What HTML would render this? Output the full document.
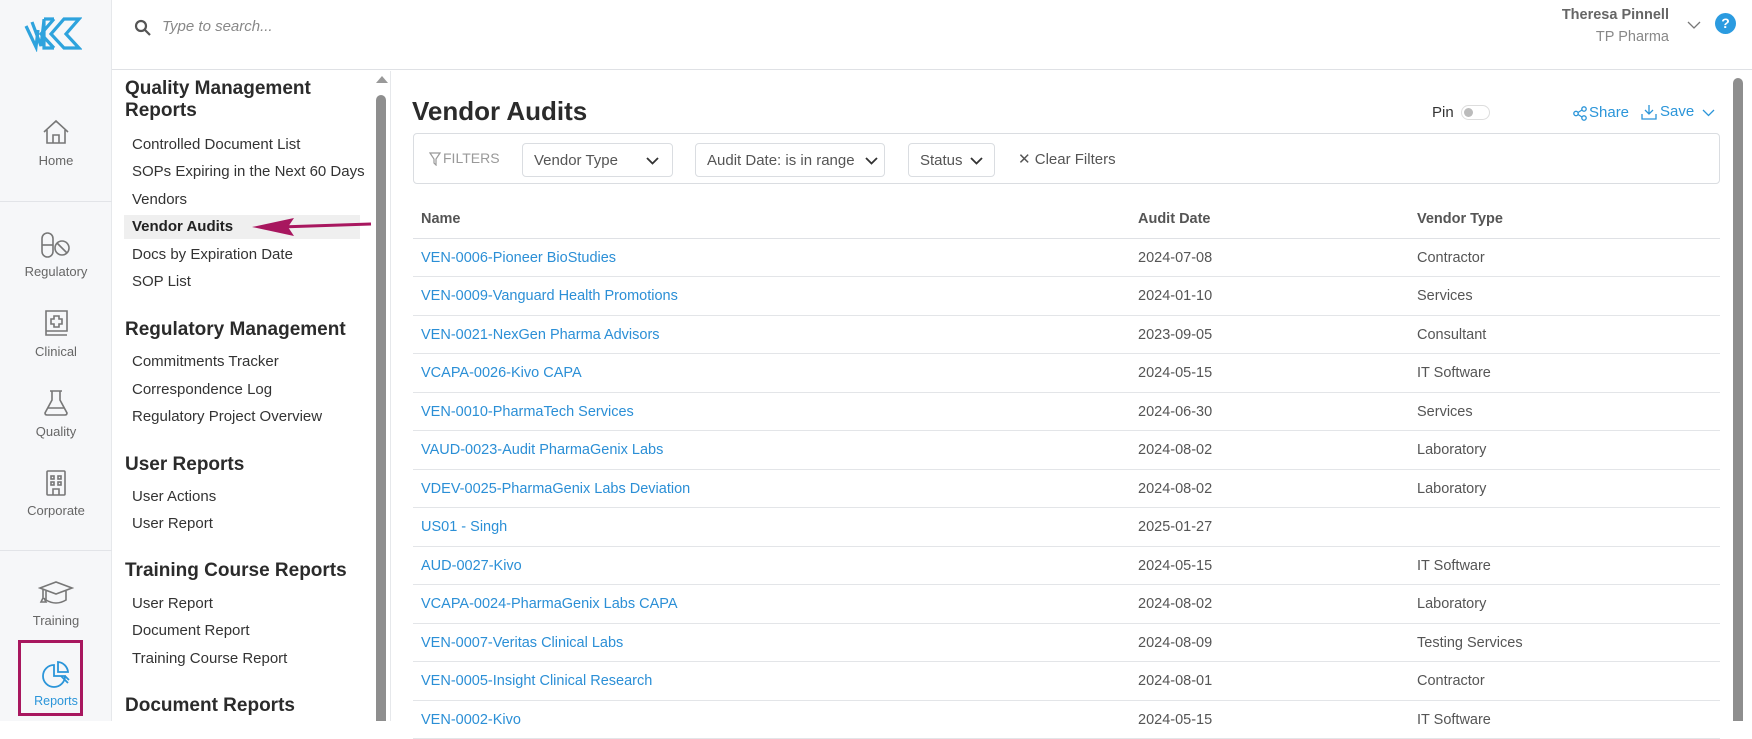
<!DOCTYPE html>
<html><head><meta charset="utf-8"><style>
*{box-sizing:border-box;margin:0;padding:0}
body{width:1752px;height:721px;overflow:hidden;background:#fff;font-family:"Liberation Sans",sans-serif;color:#333;position:relative}
.abs{position:absolute}
.rail{left:0;top:0;width:112px;height:721px;background:#f6f7f9;border-right:1px solid #e6e8eb}
.rl{position:absolute;width:112px;text-align:center;font-size:13px;color:#666}
.ri{position:absolute;left:41px;width:30px;height:30px}
.hdr{left:112px;top:0;right:0;height:70px;border-bottom:1px solid #dfe1e5;background:#fff}
.nav{left:112px;top:71px;width:262px;height:650px}
.nh{position:absolute;left:13px;font-size:19px;font-weight:bold;color:#2b2b2b;line-height:22px}
.ni{position:absolute;left:20px;font-size:15px;color:#333;line-height:18px}
.row{position:absolute;left:413px;width:1307px;height:38.5px;border-bottom:1px solid #e3e5e8;font-size:14.5px}
.row span{position:absolute;top:11px}
.a{left:8px;color:#2b8fd6}.b{left:725px;color:#555}.c{left:1004px;color:#555}
.fb{position:absolute;top:9px;height:34px;border:1px solid #dadde1;border-radius:4px;font-size:15px;color:#555;padding:8px 11px}
</style></head><body>
<div class="abs rail">
<svg class="abs" style="left:24px;top:10px" width="58" height="42" viewBox="0 0 58 42"><g fill="none" stroke="#2ea3dd" stroke-width="3.2"><path d="M2 16 L12 37 L14 20"/><path d="M8 12 L17 36 L20 10"/><path d="M20 9 H30 M20 9 V38 H30"/><path d="M30 9 L17 24 L30 38"/><path d="M40 9 H55 L42 24 L55 38 H40 L27 24 Z"/></g></svg>
<div class="abs" style="left:0;top:201px;width:112px;border-top:1px solid #e2e4e8"></div>
<div class="abs" style="left:0;top:550px;width:112px;border-top:1px solid #e2e4e8"></div>
<svg class="ri" style="top:118px" viewBox="0 0 30 30" fill="none" stroke="#777" stroke-width="1.6"><path d="M3 14 L15 3 L27 14 M6 12 V25 H24 V12 M12 25 V17 H18 V25"/></svg>
<div class="rl" style="top:153px">Home</div>
<svg class="ri" style="top:230px" viewBox="0 0 30 30" fill="none" stroke="#777" stroke-width="1.6"><rect x="1" y="3" width="11" height="24" rx="5.5"/><path d="M1 15 H12"/><circle cx="21" cy="18" r="7"/><path d="M16 13 L26 23"/></svg>
<div class="rl" style="top:264px">Regulatory</div>
<svg class="ri" style="top:308px" viewBox="0 0 30 30" fill="none" stroke="#777" stroke-width="1.6"><path d="M5 3 H26 V23 H5 Z M5 23 V27 H26"/><path d="M13 8 H18 V11 H21 V16 H18 V19 H13 V16 H10 V11 H13 Z"/></svg>
<div class="rl" style="top:344px">Clinical</div>
<svg class="ri" style="top:388px" viewBox="0 0 30 30" fill="none" stroke="#777" stroke-width="1.6"><path d="M9 3 H21 M11 3 V12 L4 25 Q4 27 6 27 H24 Q26 27 26 25 L19 12 V3 M7 20 H23"/></svg>
<div class="rl" style="top:424px">Quality</div>
<svg class="ri" style="top:468px" viewBox="0 0 30 30" fill="none" stroke="#777" stroke-width="1.6"><rect x="6" y="3" width="18" height="24" rx="1"/><rect x="10" y="8" width="3" height="3"/><rect x="17" y="8" width="3" height="3"/><rect x="10" y="14" width="3" height="3"/><rect x="17" y="14" width="3" height="3"/><path d="M12 27 V21 H18 V27"/></svg>
<div class="rl" style="top:503px">Corporate</div>
<svg class="ri" style="left:38px;top:578px;width:36px" viewBox="0 0 36 30" fill="none" stroke="#777" stroke-width="1.6"><path d="M2 10 L18 4 L34 10 L18 16 Z M8 13 V22 Q18 28 28 22 V13 M5 11 V20 L3 24 H8 L6 20"/></svg>
<div class="rl" style="top:613px">Training</div>
<div class="abs" style="left:18px;top:640px;width:65px;height:76px;border:3px solid #a8175f"></div>
<svg class="ri" style="top:659px" viewBox="0 0 30 30" fill="none" stroke="#2b95d9" stroke-width="1.8"><path d="M13 6 A11 11 0 1 0 24 17 H13 Z"/><path d="M17 3 A11 11 0 0 1 27 13 H17 Z"/><path d="M20 17 L27 24 M24 17 L28 21"/></svg>
<div class="rl" style="top:694px;color:#2b95d9;font-size:12.5px">Reports</div>
</div>
<div class="abs hdr">
<svg class="abs" style="left:22px;top:19px" width="18" height="18" viewBox="0 0 18 18" fill="none" stroke="#555" stroke-width="2.2"><circle cx="7" cy="7" r="5"/><path d="M11 11 L16 16"/></svg>
<div class="abs" style="left:50px;top:18px;font-size:15px;font-style:italic;color:#888">Type to search...</div>
<div class="abs" style="right:83px;top:7px;font-size:14.5px;font-weight:bold;color:#666;text-align:right">Theresa Pinnell</div>
<div class="abs" style="right:83px;top:29px;font-size:14.5px;color:#888;text-align:right">TP Pharma</div>
<svg class="abs" style="left:1575px;top:21px" width="14" height="9" viewBox="0 0 14 9" fill="none" stroke="#777" stroke-width="1.3"><path d="M1 1 L7 7 L13 1"/></svg>
<div class="abs" style="left:1603px;top:13px;width:21px;height:21px;border-radius:50%;background:#2b9be0;color:#fff;font-weight:bold;font-size:14px;text-align:center;line-height:21px">?</div>
</div>
<div class="abs nav">
<div class="nh" style="top:7px">Quality Management<br>Reports</div>
<div class="abs" style="left:12px;top:144px;width:236px;height:24px;background:#efefef"></div>
<div class="ni" style="top:65px">Controlled Document List</div>
<div class="ni" style="top:92px">SOPs Expiring in the Next 60 Days</div>
<div class="ni" style="top:120px">Vendors</div>
<div class="ni" style="top:147px;font-weight:bold;color:#222">Vendor Audits</div>
<div class="ni" style="top:175px">Docs by Expiration Date</div>
<div class="ni" style="top:202px">SOP List</div>
<div class="nh" style="top:248px">Regulatory Management</div>
<div class="ni" style="top:282px">Commitments Tracker</div>
<div class="ni" style="top:310px">Correspondence Log</div>
<div class="ni" style="top:337px">Regulatory Project Overview</div>
<div class="nh" style="top:383px">User Reports</div>
<div class="ni" style="top:417px">User Actions</div>
<div class="ni" style="top:444px">User Report</div>
<div class="nh" style="top:489px">Training Course Reports</div>
<div class="ni" style="top:524px">User Report</div>
<div class="ni" style="top:551px">Document Report</div>
<div class="ni" style="top:579px">Training Course Report</div>
<div class="nh" style="top:624px">Document Reports</div>
<svg class="abs" style="left:138px;top:143px" width="122" height="26" viewBox="0 0 122 26"><path d="M30 13 L121 10" stroke="#a8175f" stroke-width="3"/><path d="M2 13 L44 4 L38 13 L44 22 Z" fill="#a8175f"/></svg>
</div>
<div class="abs" style="left:374px;top:71px;width:14px;height:650px;background:#fff"></div>
<div class="abs" style="left:376px;top:76px;width:0;height:0;border-left:6px solid transparent;border-right:6px solid transparent;border-bottom:7px solid #999"></div>
<div class="abs" style="left:376px;top:95px;width:10px;height:626px;background:#8e8e8e;border-radius:5px 5px 0 0"></div>
<div class="abs" style="left:390px;top:71px;width:1px;height:650px;background:#e6e8eb"></div>
<div class="abs" style="left:1733px;top:78px;width:10px;height:643px;background:#8e8e8e;border-radius:5px 5px 0 0"></div>
<div class="abs" style="left:412px;top:96px;font-size:26px;font-weight:bold;color:#2b2b2b">Vendor Audits</div>
<div class="abs" style="left:1432px;top:104px;font-size:15px;color:#333">Pin</div>
<div class="abs" style="left:1461px;top:105px;width:29px;height:15px;border:1px solid #ddd;border-radius:8px"><div class="abs" style="left:2px;top:2px;width:9px;height:9px;border-radius:50%;background:#bbb"></div></div>
<svg class="abs" style="left:1573px;top:106px" width="14" height="15" viewBox="0 0 14 15" fill="none" stroke="#2b95d9" stroke-width="1.3"><circle cx="11" cy="3" r="2.2"/><circle cx="3" cy="7.5" r="2.2"/><circle cx="11" cy="12" r="2.2"/><path d="M5 6.5 L9 4 M5 8.5 L9 11"/></svg>
<div class="abs" style="left:1589px;top:104px;font-size:15px;color:#2b95d9">Share</div>
<svg class="abs" style="left:1641px;top:104px" width="16" height="16" viewBox="0 0 16 16" fill="none" stroke="#2b95d9" stroke-width="1.3"><path d="M8 1 V10 M4 6 L8 10 L12 6 M1 10 V15 H15 V10"/></svg>
<div class="abs" style="left:1660px;top:103px;font-size:15px;color:#2b95d9">Save</div>
<svg class="abs" style="left:1702px;top:109px" width="13" height="8" viewBox="0 0 13 8" fill="none" stroke="#2b95d9" stroke-width="1.3"><path d="M1 1 L6.5 6.5 L12 1"/></svg>
<div class="abs" style="left:413px;top:133px;width:1307px;height:51px;border:1px solid #dadde1;border-radius:4px">
<svg class="abs" style="left:15px;top:18px" width="12" height="14" viewBox="0 0 12 14" fill="none" stroke="#999" stroke-width="1.2"><path d="M1 1 H11 L7 7 V13 L5 11 V7 Z"/></svg>
<div class="abs" style="left:29px;top:16px;font-size:14px;color:#999">FILTERS</div>
<div class="fb" style="left:108px;width:151px">Vendor Type<svg class="abs" style="right:13px;top:13px" width="13" height="8" viewBox="0 0 13 8" fill="none" stroke="#333" stroke-width="1.8"><path d="M1 1 L6.5 6.5 L12 1"/></svg></div>
<div class="fb" style="left:281px;width:190px">Audit Date: is in range<svg class="abs" style="right:6px;top:13px" width="13" height="8" viewBox="0 0 13 8" fill="none" stroke="#333" stroke-width="1.8"><path d="M1 1 L6.5 6.5 L12 1"/></svg></div>
<div class="fb" style="left:494px;width:87px">Status<svg class="abs" style="right:11px;top:13px" width="13" height="8" viewBox="0 0 13 8" fill="none" stroke="#333" stroke-width="1.8"><path d="M1 1 L6.5 6.5 L12 1"/></svg></div>
<div class="abs" style="left:604px;top:16px;font-size:15px;color:#555">✕ Clear Filters</div>
</div>
<div class="row" style="top:200px;font-weight:bold;border-bottom:1px solid #dfe1e5"><span class="a" style="color:#555">Name</span><span class="b">Audit Date</span><span class="c">Vendor Type</span></div>
<div class="row" style="top:238.5px"><span class="a">VEN-0006-Pioneer BioStudies</span><span class="b">2024-07-08</span><span class="c">Contractor</span></div>
<div class="row" style="top:277px"><span class="a">VEN-0009-Vanguard Health Promotions</span><span class="b">2024-01-10</span><span class="c">Services</span></div>
<div class="row" style="top:315.5px"><span class="a">VEN-0021-NexGen Pharma Advisors</span><span class="b">2023-09-05</span><span class="c">Consultant</span></div>
<div class="row" style="top:354px"><span class="a">VCAPA-0026-Kivo CAPA</span><span class="b">2024-05-15</span><span class="c">IT Software</span></div>
<div class="row" style="top:392.5px"><span class="a">VEN-0010-PharmaTech Services</span><span class="b">2024-06-30</span><span class="c">Services</span></div>
<div class="row" style="top:431px"><span class="a">VAUD-0023-Audit PharmaGenix Labs</span><span class="b">2024-08-02</span><span class="c">Laboratory</span></div>
<div class="row" style="top:469.5px"><span class="a">VDEV-0025-PharmaGenix Labs Deviation</span><span class="b">2024-08-02</span><span class="c">Laboratory</span></div>
<div class="row" style="top:508px"><span class="a">US01 - Singh</span><span class="b">2025-01-27</span><span class="c"></span></div>
<div class="row" style="top:546.5px"><span class="a">AUD-0027-Kivo</span><span class="b">2024-05-15</span><span class="c">IT Software</span></div>
<div class="row" style="top:585px"><span class="a">VCAPA-0024-PharmaGenix Labs CAPA</span><span class="b">2024-08-02</span><span class="c">Laboratory</span></div>
<div class="row" style="top:623.5px"><span class="a">VEN-0007-Veritas Clinical Labs</span><span class="b">2024-08-09</span><span class="c">Testing Services</span></div>
<div class="row" style="top:662px"><span class="a">VEN-0005-Insight Clinical Research</span><span class="b">2024-08-01</span><span class="c">Contractor</span></div>
<div class="row" style="top:700.5px"><span class="a">VEN-0002-Kivo</span><span class="b">2024-05-15</span><span class="c">IT Software</span></div>
</body></html>
